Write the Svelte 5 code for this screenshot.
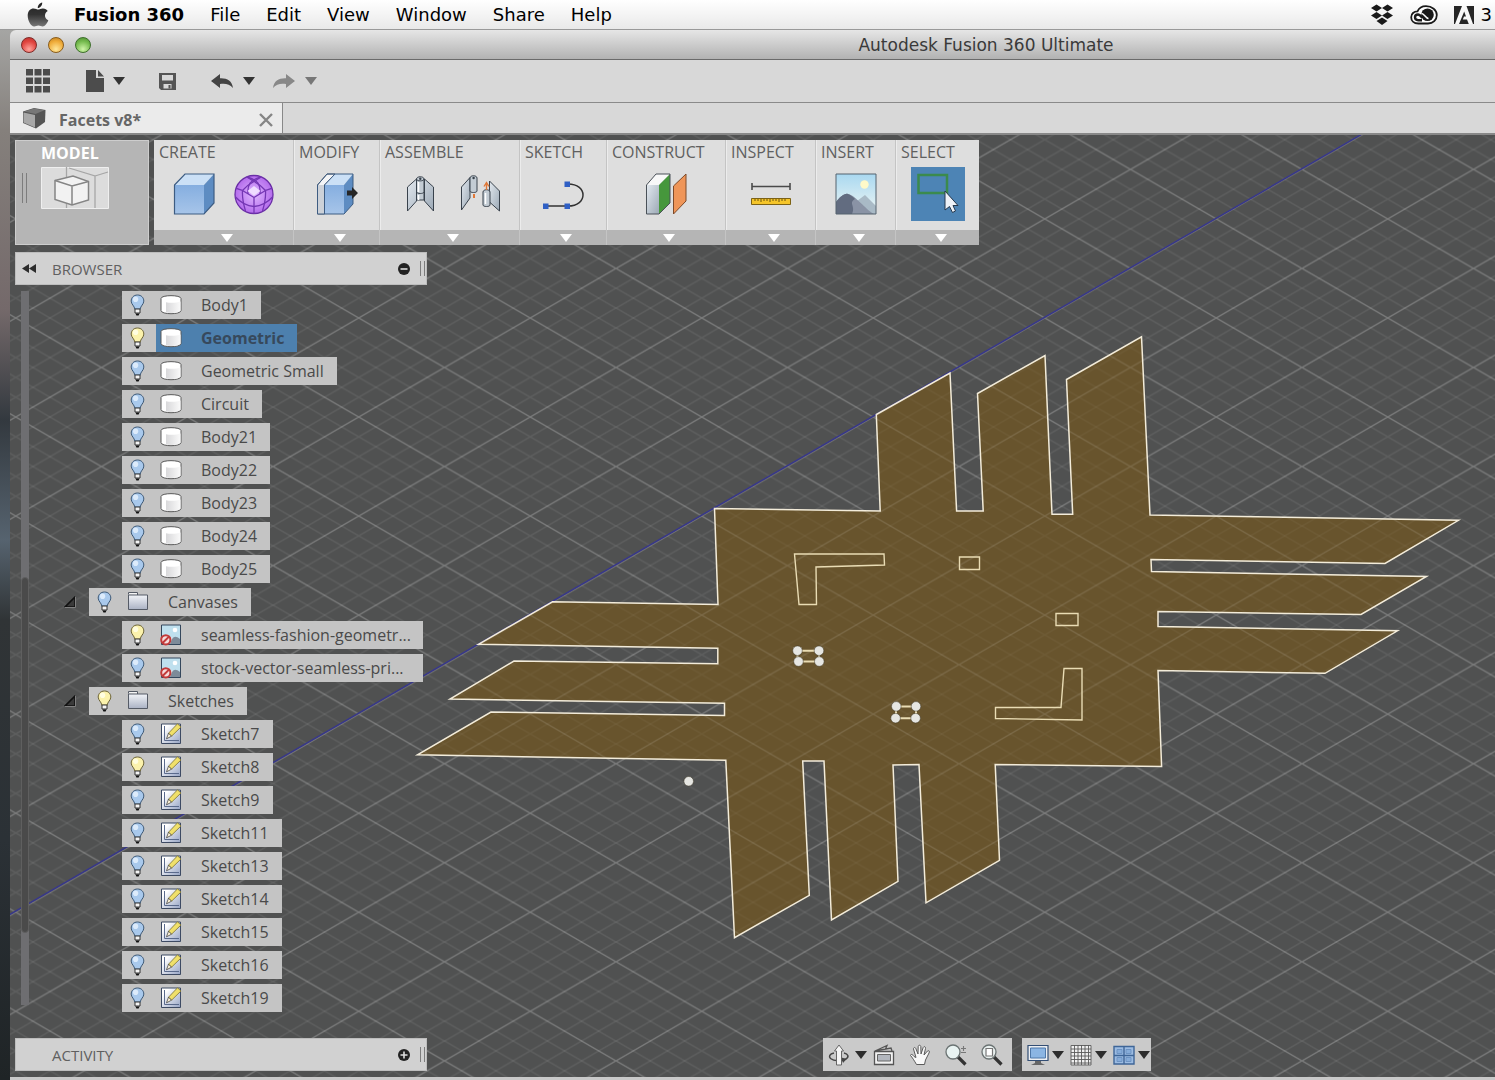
<script>
  const menus = ['File', 'Edit', 'View', 'Window', 'Share', 'Help'];
  const sections = [
    { label: 'CREATE', icons: ['box', 'sphere'] },
    { label: 'MODIFY', icons: ['presspull'] },
    { label: 'ASSEMBLE', icons: ['hinge', 'joint'] },
    { label: 'SKETCH', icons: ['sketchline'] },
    { label: 'CONSTRUCT', icons: ['plane'] },
    { label: 'INSPECT', icons: ['measure'] },
    { label: 'INSERT', icons: ['image'] },
    { label: 'SELECT', icons: ['select'] }
  ];
  const body = (name, on = false, selected = false) => ({ name, on, selected, icon: 'body' });
  const sketch = (name, on = false) => ({ name, on, icon: 'sketch' });
  const tree = [
    body('Body1'),
    body('Geometric', true, true),
    body('Geometric Small'),
    body('Circuit'),
    body('Body21'),
    body('Body22'),
    body('Body23'),
    body('Body24'),
    body('Body25'),
    { name: 'Canvases', icon: 'folder', group: true },
    { name: 'seamless-fashion-geometr...', icon: 'canvas', on: true, wide: true },
    { name: 'stock-vector-seamless-pri...', icon: 'canvas', wide: true },
    { name: 'Sketches', icon: 'folder', group: true, on: true },
    sketch('Sketch7'),
    sketch('Sketch8', true),
    sketch('Sketch9'),
    sketch('Sketch11'),
    sketch('Sketch13'),
    sketch('Sketch14'),
    sketch('Sketch15'),
    sketch('Sketch16'),
    sketch('Sketch19')
  ];
  const gridSteps = [-4, -3, -2, -1, 1, 2, 3, 4];
  const W = 171.5;
  const H = 99.05;
  const outline =
    '714.5,508.5 880.2,511 876.3,414.5 950,373 956.6,511 983.2,511 977.5,393.5 1045,355.5 1052,514.3 1072.7,514.3 1066.5,379.5 1141.5,336.8 1150,515 1458.5,520.3 1385,563.5 1151,559.5 1151.5,571.5 1426.5,576.5 1361,614.5 1158,611.5 1158,626.5 1397.5,630.8 1325,673.3 1158,670.5 1161.6,766.5 995.2,764.5 999.5,860.3 926,902.8 919,764.5 893,765 898,881.3 831.5,920 824,761 802.7,761 809.3,895.3 734.5,937.7 725.8,760.2 417.5,754.8 491,712 724.5,715.5 724.5,703.3 450,699 514,661 717.8,663.7 717.8,648.3 478.5,644.3 552.5,601.8 718,604.5';
  const points = [
    [797.5, 650.7], [819, 650.7], [798.5, 661.5], [819.3, 661.5],
    [896.3, 706.4], [916, 706.4], [895.6, 718.2], [915.6, 718.2],
    [688.7, 781.3]
  ];
</script>

{#snippet down(cls)}
  <svg class={cls} width="12" height="8" viewBox="0 0 12 8" aria-hidden="true"><path d="M0 0H12L6 8Z" fill="currentColor" /></svg>
{/snippet}

{#snippet bulb(on)}
  <svg width="15" height="22" viewBox="0 0 15 22" aria-hidden="true">
    <path d="M7.5 1C3.6 1 1.2 3.8 1.2 7.1 1.2 10.3 4.6 12 4.8 15.2H10.2C10.4 12 13.8 10.3 13.8 7.1 13.8 3.8 11.4 1 7.5 1Z" fill={on ? '#fbf2ac' : '#a9c9ec'} stroke={on ? '#6d6436' : '#3c5876'} stroke-width="1" />
    <ellipse cx="5.6" cy="5.3" rx="2.6" ry="2.8" fill={on ? '#fffde0' : '#dcebfb'} />
    <path d="M5 15H10V19H5Z" fill="#f4f4f4" stroke="#333" stroke-width="1" />
    <path d="M5.5 19.5H9.5L8.6 21.5H6.4Z" fill="#111" />
  </svg>
{/snippet}

{#snippet nodeIcon(kind)}
  <svg width="22" height="22" viewBox="0 0 22 22" aria-hidden="true">
    {#if kind === 'body'}
      <path d="M1 4.500C1 .7 21 .7 21 4.500V16.500C21 20.800 1 20.800 1 16.500Z" fill="#fff" stroke="#5a5a5a" />
      <path d="M6 8.200C10 9 17 9 20.500 7.500V16.500C19 19 10 19.500 6 18.500Z" fill="url(#bodyShade)" />
    {:else if kind === 'folder'}
      <path d="M1.500 3.500V1.500H10.500V4" fill="#f5f5f5" stroke="#555b66" />
      <path d="M1.500 4H20.500V18.500H1.500Z" fill="url(#folderShade)" stroke="#555b66" />
    {:else if kind === 'canvas'}
      <path d="M1.500 1H20.500V20.500H1.500Z" fill="#bfe0ee" stroke="#34475c" />
      <path d="M2 14L7 10 20 20H2Z" fill="#dfe6ea" />
      <path d="M10 20C12 14 14 10 20 15V20Z" fill="#7d8b99" />
      <circle cx="15" cy="6" r="2.300" fill="#fff" />
      <circle cx="5.800" cy="15.800" r="4.600" fill="#f6dcdc" stroke="#c23a3a" stroke-width="2" />
      <path d="M2.800 18.800L9 12.600" stroke="#c23a3a" stroke-width="2" />
    {:else}
      <path d="M1.500 1H20.500V20.500H1.500Z" fill="url(#sketchShade)" stroke="#3d4a63" />
      <path d="M4.500 3V17.500H19" fill="none" stroke="#5a6a8c" />
      <path d="M17.500 .8L21 4 11.500 13.200 8.500 10.200Z" fill="#f0e06a" stroke="#7a7033" stroke-width=".8" />
      <path d="M8.500 10.200L11.500 13.200 6.500 15.800Z" fill="#fff4d8" stroke="#333" stroke-width=".7" />
    {/if}
  </svg>
{/snippet}

{#snippet toolIcon(kind)}
  <svg width="42" height="42" viewBox="0 0 42 42" aria-hidden="true">
    {#if kind === 'box'}
      <path d="M1.500 12L12 1H41L31 12Z" fill="#cbe0f6" />
      <path d="M31 12L41 1V30L31 41Z" fill="#5d8cc2" />
      <path d="M1.500 12H31V41H1.500Z" fill="url(#blueFace)" />
      <path d="M1.500 12L12 1H41V30L31 41H1.500Z" fill="none" stroke="#3d5c82" stroke-width="1.200" />
    {:else if kind === 'sphere'}
      <circle cx="21" cy="21.500" r="19" fill="url(#purple)" stroke="#6a2ea6" stroke-width="1.300" />
      <g fill="none" stroke="#7436b4" stroke-width="1.300">
        <path d="M21 24.500V40.500M21 24.500L9.500 17.500M21 24.500L32.500 17.500" />
        <path d="M9.500 17.500C13 13.500 16 11 21 8.500 26 11 29 13.500 32.500 17.500" />
        <path d="M9.500 17.500C9 25 10 30 12.500 38M32.500 17.500C33 25 32 30 29.500 38" />
        <path d="M9.500 17.500C6.500 16.500 4.500 16 3 15M32.500 17.500C35.500 16.500 37.500 16 39 15M21 8.500C17 6 15 4.500 13.500 4M21 8.500C25 6 27 4.500 28.500 4" />
        <path d="M2.500 24C8 30 14 33 21 33.500 28 33 34 30 39.500 24M15 21C14 12 17 7 28 4M27 21C28 12 25 7 14 4" />
      </g>
      <path d="M21 13L27.500 18 21 22.500 14.500 18Z" fill="#efdcff" />
    {:else if kind === 'presspull'}
      <path d="M1.500 12L11 1H19L8.500 12V41H1.500Z" fill="#f4f5f7" stroke="#59636f" />
      <path d="M1.500 12H8.500V41H1.500Z" fill="#ccd1d8" />
      <path d="M8.500 12L19 1H37L28 12Z" fill="#cbe0f6" />
      <path d="M28 12L37 1V31L28 41Z" fill="#5d8cc2" />
      <path d="M8.500 12H28V41H8.500Z" fill="url(#blueFace)" />
      <path d="M1.500 12L11 1H37V31L28 41H1.500ZM8.500 41V12L19 1" fill="none" stroke="#3d5c82" />
      <path d="M31 17.500H36V14L42 20 36 26V22.500H31Z" fill="#262626" />
    {:else if kind === 'hinge'}
      <path d="M8.500 14L17.500 6V28L8.500 38ZM34.500 14L25.500 6V28L34.500 38Z" fill="url(#steel)" stroke="#39424c" />
      <path d="M17.500 6C17.500 3 25 3 25 6V27H17.500Z" fill="#c3ccd4" stroke="#39424c" />
      <path d="M17.500 6C17.500 8.500 25 8.500 25 6M17.500 19C18 21 24.500 21 25 19" fill="none" stroke="#39424c" />
      <path d="M19.500 9V19M19.500 22V27" stroke="#fff" stroke-width="1.600" />
      <circle cx="21.300" cy="5.700" r="1.200" fill="#39424c" />
    {:else if kind === 'joint'}
      <path d="M2.500 14L11 4.500V25L2.500 37Z" fill="url(#steel)" stroke="#39424c" />
      <path d="M11 5C11 2 18 2 18 5V18C18 20 11 20 11 18Z" fill="#c3ccd4" stroke="#39424c" />
      <circle cx="14.600" cy="5" r="1.200" fill="#39424c" />
      <path d="M15 21V25" stroke="#e07838" stroke-width="2" />
      <path d="M30.500 8L40.500 18V38L30.500 29Z" fill="url(#steel)" stroke="#39424c" />
      <path d="M24 19C24 16 31 16 31 19V32C31 34 24 34 24 32Z" fill="#c3ccd4" stroke="#39424c" />
      <path d="M26.500 20V31" stroke="#fff" stroke-width="1.500" />
      <path d="M27.500 17V10M25 13.500L27.500 9.500 30 13.500" fill="none" stroke="#e07838" stroke-width="1.400" />
    {:else if kind === 'sketchline'}
      <path d="M4 33H26C46 33 46 11 26 11" fill="none" stroke="#333" stroke-width="1.500" />
      <path d="M1 30.500H6.500V36H1ZM22.500 30.500H28V36H22.500ZM22.500 8.500H28V14H22.500Z" fill="#2f5fc4" />
    {:else if kind === 'plane'}
      <path d="M1.500 12L11 1H25L14 12Z" fill="#f8f8f8" />
      <path d="M1.500 12H14V41H1.500Z" fill="url(#steel)" />
      <path d="M14 12L25 1V30L14 41Z" fill="#46973c" />
      <path d="M1.500 12L11 1H25V30L14 41H1.500Z" fill="none" stroke="#4a5158" />
      <path d="M28.500 13L41 1V28L28.500 41Z" fill="#ef9558" stroke="#7d4a2a" />
    {:else if kind === 'measure'}
      <path d="M2 13.500H40M2 10V17M40 10V17" stroke="#4a4a4a" stroke-width="1.600" />
      <path d="M1.500 25.500H40.500V31.500H1.500Z" fill="#f5c52a" stroke="#7d6215" />
      <path d="M5 26V28M8 26V28M11 26V29M14 26V28M17 26V28M20 26V29M23 26V28M26 26V28M29 26V29M32 26V28M35 26V28" stroke="#6b520f" />
    {:else if kind === 'image'}
      <path d="M1 1H41V41H1Z" fill="url(#sky)" />
      <circle cx="29.500" cy="11.500" r="4.200" fill="#fff9c9" />
      <path d="M18 31L30 22 41 33V41H18Z" fill="#a9bac6" />
      <path d="M1 29C5 24 9 20 13 21 20 22 30 36 39 41H1Z" fill="#8a93a5" />
      <path d="M1 29C5 24 9 20 13 21 16 22 18 24 20 26 13 30 21 33 17 41H1Z" fill="#626c80" />
      <path d="M1 1H41V41H1Z" fill="none" stroke="#55636f" />
    {/if}
  </svg>
{/snippet}

<svg class="defs" width="0" height="0" aria-hidden="true">
  <defs>
    <linearGradient id="bodyShade"><stop offset="0" stop-color="#d8d8da" /><stop offset="1" stop-color="#fafafa" /></linearGradient>
    <linearGradient id="folderShade" x2="0" y2="1"><stop offset="0" stop-color="#f2f4f8" /><stop offset="1" stop-color="#aab2c4" /></linearGradient>
    <linearGradient id="sketchShade" x2="1" y2="1"><stop offset=".2" stop-color="#fff" /><stop offset="1" stop-color="#95a3c4" /></linearGradient>
    <linearGradient id="blueFace" x2="0" y2="1"><stop offset="0" stop-color="#85aee0" /><stop offset="1" stop-color="#a7c5e9" /></linearGradient>
    <linearGradient id="steel" x2="1" y2="1"><stop offset="0" stop-color="#e3e9ef" /><stop offset="1" stop-color="#9ca9b6" /></linearGradient>
    <linearGradient id="sky" x2="0" y2="1"><stop offset="0" stop-color="#a9d8f0" /><stop offset="1" stop-color="#eef6f4" /></linearGradient>
    <radialGradient id="purple"><stop offset="0" stop-color="#dfb6ff" /><stop offset="1" stop-color="#b46cec" /></radialGradient>
    <linearGradient id="apple" x2="0" y2="1"><stop offset="0" stop-color="#222" /><stop offset=".5" stop-color="#333" /><stop offset="1" stop-color="#777" /></linearGradient>
  </defs>
</svg>

<div class="screen">
  <header class="menubar">
    <button class="apple" aria-label="Apple menu">
      <svg width="22" height="25" viewBox="0 0 22 25" aria-hidden="true">
        <path d="M15.200 .5C15.500 3.200 13 6.200 10.800 6 10.500 3.500 12.800 .9 15.200 .5ZM11.200 7.600C12.500 7.600 13.800 6.300 16 6.400 18.200 6.500 19.800 7.500 20.700 9 16.600 11.500 17.400 16.800 21.300 18.300 20.200 21.300 17.900 24.500 15.700 24.500 14 24.500 13.200 23.500 11.400 23.500 9.500 23.500 8.700 24.500 7.200 24.500 4 24.500 .7 18.500 .7 13.700 .7 9 3.500 6.500 6.600 6.500 8.600 6.500 10 7.600 11.200 7.600Z" fill="url(#apple)" />
      </svg>
    </button>
    <nav>
      <button class="app">Fusion 360</button>
      {#each menus as m}<button>{m}</button>{/each}
    </nav>
    <div class="status">
      <svg width="24" height="22" viewBox="0 0 24 22" aria-hidden="true">
        <path d="M6.500 .5L12 4 6.500 7.500 1 4ZM17.500 .5L23 4 17.500 7.500 12 4ZM6.500 8L12 11.500 6.500 15 1 11.500ZM17.500 8L23 11.500 17.500 15 12 11.500ZM12 13.500L17.500 17 12 21 6.500 17Z" fill="#1a1a1a" />
      </svg>
      <svg width="28" height="20" viewBox="0 0 28 20" aria-hidden="true">
        <path d="M8.500 18.500C3.500 18.500 1.200 15.500 1.200 12.200 1.200 8.800 4 6.300 7.500 6.300 9 3 12 1.200 16 1.200 22 1.200 26.800 5 26.800 10 26.800 15 23 18.500 18 18.500Z" fill="#fff" stroke="#1a1a1a" stroke-width="1.800" />
        <path d="M12.500 13C10.500 10.500 9.500 9.500 8 9.500 6.200 9.500 5 10.700 5 12.300 5 14 6.200 15.200 8.200 15.200H12" fill="none" stroke="#1a1a1a" stroke-width="2.400" />
        <circle cx="17.500" cy="9.800" r="6.300" fill="#1a1a1a" />
        <path d="M11.500 8.500C14 8 15.500 13.500 18.500 13.500" fill="none" stroke="#fff" stroke-width="1.500" />
      </svg>
      <svg width="20" height="18" viewBox="0 0 20 18" aria-hidden="true">
        <path d="M0 0H20V18H0Z" fill="#262626" />
        <path d="M8 0H12.500L19 18H14.800L13 13.500H8.800L10 10.500H12L10.200 5.500 5 18H1Z" fill="#f8f8f8" />
      </svg>
      <span>3</span>
    </div>
  </header>

  <div class="window">
    <div class="titlebar">
      <div class="lights">
        <button class="red" aria-label="Close"></button><button class="amber" aria-label="Minimize"></button><button class="green" aria-label="Zoom"></button>
      </div>
      <h1>Autodesk Fusion 360 Ultimate</h1>
    </div>

    <div class="quick">
      <button aria-label="Data panel">
        <svg width="24" height="24" viewBox="0 0 24 24" aria-hidden="true"><path d="M0 0H7V6.500H0ZM8.500 0H15.500V6.500H8.500ZM17 0H24V6.500H17ZM0 8.500H7V15H0ZM8.500 8.500H15.500V15H8.500ZM17 8.500H24V15H17ZM0 17H7V23.500H0ZM8.500 17H15.500V23.500H8.500ZM17 17H24V23.500H17Z" fill="#4c4c4c" /></svg>
      </button>
      <button class="file" aria-label="File">
        <svg width="18" height="22" viewBox="0 0 18 22" aria-hidden="true"><path d="M0 0H10V8H18V22H0ZM12 0L18 6.500H12Z" fill="#4c4c4c" /></svg>
        {@render down('')}
      </button>
      <button class="save" aria-label="Save">
        <svg width="17" height="17" viewBox="0 0 17 17" aria-hidden="true"><path d="M0 0H17V17H2L0 15ZM3 2V7.500H14V2ZM4.500 11V15.500H12.500V11Z" fill="#555" fill-rule="evenodd" /><path d="M9.500 12H11.500V15.500H9.500Z" fill="#555" /></svg>
      </button>
      <button class="undo" aria-label="Undo">
        <svg width="22" height="15" viewBox="0 0 22 15" aria-hidden="true"><path d="M0 7L9 0V4.300C16 4 21 6.500 22 14 18.500 10 15 9.500 9 10V14Z" fill="#444" /></svg>
        {@render down('')}
      </button>
      <button class="redo" aria-label="Redo">
        <svg width="22" height="15" viewBox="0 0 22 15" aria-hidden="true"><path d="M22 7L13 0V4.300C6 4 1 6.500 0 14 3.500 10 7 9.500 13 10V14Z" fill="#888" /></svg>
        {@render down('')}
      </button>
    </div>

    <div class="tabs">
      <div class="tab">
        <svg width="23" height="21" viewBox="0 0 23 21" aria-hidden="true"><path d="M0 3.500L11 0 22.500 2 22 14 13 20.500 0 15Z" fill="#555" /><path d="M.5 4.500L12 7V19.500L.5 14.500Z" fill="#a8a8a8" /><path d="M1 3.500L11 .5 21.500 2.300 12.500 6Z" fill="#777" /></svg>
        <span>Facets v8*</span>
        <button aria-label="Close tab"><svg width="14" height="14" viewBox="0 0 14 14" aria-hidden="true"><path d="M1 1L13 13M13 1L1 13" stroke="#858585" stroke-width="2.400" /></svg></button>
      </div>
    </div>

    <main>
      <svg class="scene" width="100%" height="100%" aria-hidden="true">
        <defs>
          <pattern id="isoGrid" patternUnits="userSpaceOnUse" x="101.500" y="70.350" width={W} height={H}>
            <g stroke="#fff" stroke-opacity=".07" stroke-width="1.500">
              {#each gridSteps as k}
                <path d="M0 {(k * H) / 5}L{W} {(k * H) / 5 + H}M0 {(k * H) / 5 + H}L{W} {(k * H) / 5}" />
              {/each}
            </g>
            <path d="M0 0L{W} {H}M0 {H}L{W} 0" stroke="#fff" stroke-opacity=".24" stroke-width="1.400" />
          </pattern>
        </defs>
        <g transform="translate(-10 -135)">
          <rect x="10" y="135" width="100%" height="100%" fill="#505151" />
          <rect x="10" y="135" width="100%" height="100%" fill="url(#isoGrid)" />
          <path d="M1363 133.500L9 915" stroke="#37378a" stroke-width="1.500" />
          <polygon points={outline} fill="#68542d" />
          <polygon points={outline} fill="url(#isoGrid)" opacity=".5" />
          <polygon points={outline} fill="none" stroke="#f3ecda" stroke-width="1.500" />
          <g fill="none" stroke="#e9dcb4" stroke-width="1.400">
            <path d="M794.500 554H884L884.500 565 816 567 816.500 604.500H799ZM959.500 557H979.500V569.500H959.500ZM1056 613.500H1078V625.500H1056ZM1064 668.500H1082V720L995.500 718.500V707.500H1061Z" />
            <path d="M797.500 650.700H819M798.500 661.500H819M797.500 650V661M819 650V661M896 706.400H916M896 718.200H916M896 706V718M916 706V718" stroke-width="2" />
          </g>
          {#each points as [x, y]}
            <circle cx={x} cy={y} r="4.800" fill="#e6e6e2" stroke="#3c3626" stroke-opacity=".5" />
          {/each}
        </g>
      </svg>

      <div class="ribbon">
        <button class="workspace">
          <span class="grip"></span>
          <span class="ws">
            <span class="wsname">MODEL</span>
            <svg width="68" height="42" viewBox="0 0 68 42" aria-hidden="true">
              <path d="M.5 .5H67.500V41.500H.5Z" fill="#dcdcdc" stroke="#efefef" />
              <path d="M25.500 0V41M28 1L54 9V41M54 9L67 5" fill="none" stroke="#a6a6a6" stroke-width="1.300" />
              <path d="M14 13.500L32 9 47.500 14.500V33L31 38 14 32.500Z" fill="#f2f2f2" stroke="#858585" stroke-width="1.500" />
              <path d="M14 13.500L31 19 47.500 14.500M31 19V38" fill="none" stroke="#858585" stroke-width="1.500" />
            </svg>
          </span>
        </button>
        <div class="sections">
          {#each sections as s}
            <section>
              <h2>{s.label}</h2>
              <div class="tools">
                {#each s.icons as i}
                  {#if i === 'select'}
                    <button class="active" aria-label="Select">
                      <svg width="54" height="54" viewBox="0 0 54 54" aria-hidden="true">
                        <path d="M7.500 8H36V26H7.500Z" fill="none" stroke="#3b8a4d" stroke-width="2.500" />
                        <path d="M34 24V43L38.500 39.500 41.500 45.500 44.500 44 42 38.500H47Z" fill="#eef2f8" stroke="#26384c" />
                      </svg>
                    </button>
                  {:else}
                    <button aria-label={i}>{@render toolIcon(i)}</button>
                  {/if}
                {/each}
              </div>
              <button class="more" aria-label="{s.label} menu">{@render down('')}</button>
            </section>
          {/each}
        </div>
      </div>

      <div class="panel">
        <button class="fold" aria-label="Collapse"><svg width="14" height="9" viewBox="0 0 14 9" aria-hidden="true"><path d="M7 0V9L0 4.500ZM14 0V9L7 4.500Z" fill="#2c2c2c" /></svg></button>
        <h2>BROWSER</h2>
        <button aria-label="Hide browser"><svg width="12" height="12" viewBox="0 0 12 12" aria-hidden="true"><circle cx="6" cy="6" r="6" fill="#222" /><path d="M2.500 6H9.500" stroke="#ddd" stroke-width="1.600" /></svg></button>
        <span class="grip small"></span>
      </div>

      <div class="browser">
        <div class="track"><div class="thumb"></div></div>
        <ul>
          {#each tree as n}
            <li class:group={n.group}>
              {#if n.group}
                <button class="twist" aria-label="Collapse {n.name}"><svg width="12" height="12" viewBox="0 0 12 12" aria-hidden="true"><path d="M11 1V11H1Z" fill="#3a3a3a" stroke="#111" stroke-width="1.600" /><path d="M.5 11.500H11.500V.5" fill="none" stroke="#999" stroke-width=".8" /></svg></button>
              {/if}
              <div class="row" class:selected={n.selected} class:wide={n.wide}>
                <button class="bulb" aria-label="Toggle {n.name}">{@render bulb(n.on)}</button>
                <button class="name">{@render nodeIcon(n.icon)}<span>{n.name}</span></button>
              </div>
            </li>
          {/each}
        </ul>
      </div>

      <footer>
        <div class="panel">
          <span class="fold"></span>
          <h2>ACTIVITY</h2>
          <button aria-label="Show activity"><svg width="12" height="12" viewBox="0 0 12 12" aria-hidden="true"><circle cx="6" cy="6" r="6" fill="#222" /><path d="M2.500 6H9.500M6 2.500V9.500" stroke="#ddd" stroke-width="1.600" /></svg></button>
          <span class="grip small"></span>
        </div>
        <div class="navs">
          <div class="nav">
            <button aria-label="Orbit">
              <svg width="22" height="22" viewBox="0 0 22 22" aria-hidden="true"><path d="M6 9C1.500 10 .5 12.500 2.500 14.500 6 17.500 14 17.500 18 15 21.500 12.500 20 10 16 9" fill="none" stroke="#444" stroke-width="1.500" /><path d="M13.500 13.500L18.500 15 15 19Z" fill="#444" /><path d="M8.500 21V7H6.500L11 1 15.500 7H13.500V21Z" fill="#f4f4f4" stroke="#666" /></svg>
              {@render down('')}
            </button>
            <button aria-label="Look at"><svg width="22" height="22" viewBox="0 0 22 22" aria-hidden="true"><path d="M2 7L14 1.500 12.500 5M2 7L18 4 19 7" fill="none" stroke="#555" stroke-width="1.300" /><path d="M1.500 7.500H20.500V20.500H1.500Z" fill="#f2f2f2" stroke="#555" stroke-width="1.300" /><path d="M4.500 10.500H17.500V17H4.500Z" fill="#b3b7be" stroke="#666" /></svg></button>
            <button aria-label="Pan"><svg width="22" height="22" viewBox="0 0 22 22" aria-hidden="true"><path d="M7.500 20.500C5.500 17 3 13 1.500 11.500 1.500 10 3.500 10 5 12.500L7 13.500 4.500 5C4.500 3 6.500 3 7 5L9 10 9.200 2.500C9.500 .8 11.500 .8 11.800 2.500L12 10 14.200 3.500C15 2 16.800 2.500 16.500 4.500L15 11 18.500 7C20 6 21 7.500 20 9L16.500 16 15.500 20.500Z" fill="#f8f8f8" stroke="#5b5b5b" /></svg></button>
            <button aria-label="Zoom"><svg width="22" height="22" viewBox="0 0 22 22" aria-hidden="true"><path d="M13 13L20.500 20.500" stroke="#333" stroke-width="3.200" /><circle cx="8" cy="8" r="7" fill="#e9f3f2" stroke="#6b7373" stroke-width="1.300" /><path d="M16 4.500H21M18.500 2V7M16 8.500H21" stroke="#777" stroke-width="1.100" /></svg></button>
            <button aria-label="Fit"><svg width="22" height="22" viewBox="0 0 22 22" aria-hidden="true"><path d="M13 13L20.500 20.500" stroke="#333" stroke-width="3.200" /><circle cx="8" cy="8" r="7" fill="#e9f0ef" stroke="#6b7373" stroke-width="1.300" /><path d="M5 4.500H11.500V12H5Z" fill="#fff" stroke="#777" stroke-width="1.200" /></svg></button>
          </div>
          <div class="nav views">
            <button aria-label="Display settings">
              <svg width="22" height="22" viewBox="0 0 22 22" aria-hidden="true"><path d="M8 16H14V19L18 21H4L8 19Z" fill="#666" /><path d="M1 1.500H21V16.500H1Z" fill="#eceff3" stroke="#334e74" stroke-width="1.200" /><path d="M3.500 4H18.500V14H3.500Z" fill="#8bb5e3" stroke="#4f78a9" /></svg>
              {@render down('')}
            </button>
            <button aria-label="Grid settings">
              <svg width="22" height="22" viewBox="0 0 22 22" aria-hidden="true"><path d="M1 1.500H21V21H1Z" fill="#f0f0f0" stroke="#666" /><path d="M4.500 1V21M8 1V21M11.500 1V21M15 1V21M18.500 1V21M1 5H21M1 8.500H21M1 12H21M1 15.500H21M1 19H21" stroke="#5a5a5a" stroke-width=".9" /></svg>
              {@render down('')}
            </button>
            <button aria-label="Viewports">
              <svg width="22" height="22" viewBox="0 0 22 22" aria-hidden="true"><path d="M1 2.500H21V20H1Z" fill="#9dbce2" stroke="#3f6698" stroke-width="1.400" /><path d="M4 5.500H9V9.500H4ZM13 5.500H18V9.500H13ZM4 13.500H9V17.500H4ZM13 13.500H18V17.500H13Z" fill="#86acd9" stroke="#6e94c4" /><path d="M11 2V20M1 11.500H21" stroke="#3f6698" stroke-width="1.400" /></svg>
              {@render down('')}
            </button>
          </div>
        </div>
      </footer>
    </main>
    <div class="timeline"></div>
  </div>
</div>

<style>
  :global(body) { margin: 0; }
  .defs { position: absolute; }
  .screen {
    min-height: 100vh; display: flex; flex-direction: column; overflow: hidden;
    font-family: 'Open Sans', 'Noto Sans', sans-serif; font-size: 16px; color: #4a4a4a;
    background: linear-gradient(#a5a5a3 30px, #85807c 130px, #74696a 310px, #33393f 420px, #56636f 540px, #303436 620px, #2b3136 840px, #1f2426);
  }
  button { font: inherit; color: inherit; background: none; border: 0; padding: 0; display: flex; align-items: center; }
  h1, h2 { margin: 0; font-size: inherit; font-weight: 400; }
  svg { display: block; flex: none; }

  .menubar { height: 29px; display: flex; align-items: center; background: linear-gradient(#fff, #e9e9e9); border-bottom: 1px solid #999; color: #000; font-family: 'DejaVu Sans', sans-serif; font-size: 18px; white-space: nowrap; }
  .apple { margin-left: 27px; }
  nav { display: flex; gap: 26px; margin-left: 25px; flex: 1; }
  .app { font-weight: 700; }
  .status { display: flex; align-items: center; gap: 16px; padding-right: 3px; }
  .status span { margin-left: -9px; }

  .window { flex: 1; margin-left: 10px; display: flex; flex-direction: column; border-radius: 6px 0 0 0; overflow: hidden; }
  .titlebar { height: 29px; display: flex; align-items: center; background: linear-gradient(#e6e6e6, #b2b2b2); border-bottom: 1px solid #6a6a6a; }
  .titlebar h1 { flex: 1; text-align: center; font-family: 'DejaVu Sans', sans-serif; font-size: 17px; color: #3a3a3a; padding-left: 373px; white-space: nowrap; }
  .lights { display: flex; gap: 11px; padding-left: 11px; width: 83px; }
  .lights button { width: 16px; height: 16px; border-radius: 50%; border: 1px solid #7e2b28; }
  .red { background: radial-gradient(circle at 50% 80%, #ffa49c, #e0443e 60%, #b8332f); }
  .lights .amber { background: radial-gradient(circle at 50% 80%, #ffe79a, #efab38 60%, #bb7b1d); border-color: #8a5d1c; }
  .lights .green { background: radial-gradient(circle at 50% 80%, #cff5a8, #74ba4d 60%, #4b8a2e); border-color: #3d6f2a; }

  .quick { height: 42px; display: flex; align-items: center; padding-left: 16px; background: #d8d8d8; border-bottom: 1px solid #8a8a8a; color: #333; }
  .file { margin-left: 36px; gap: 9px; }
  .save { margin-left: 34px; }
  .undo { margin-left: 35px; gap: 10px; }
  .redo { margin-left: 18px; gap: 10px; color: #777; }

  .tabs { height: 30px; display: flex; background: #d8d8d8; border-bottom: 2px solid #888; }
  .tab { width: 272px; display: flex; align-items: center; background: #ebebeb; border-right: 1px solid #888; color: #666; font-weight: 700; }
  .tab svg { margin-left: 13px; }
  .tab span { flex: 1; margin-left: 13px; padding-top: 4px; }
  .tab button { padding-right: 9px; padding-top: 4px; }

  main { flex: 1; position: relative; display: flex; flex-direction: column; align-items: flex-start; }
  .scene { position: absolute; inset: 0; }
  .ribbon, .panel, .browser, footer { position: relative; }
  .ribbon { display: flex; gap: 5px; margin: 5px 0 0 5px; height: 105px; }
  .workspace { box-sizing: border-box; width: 134px; align-items: flex-start; background: #b5b5b5; border: 1px solid #cdcdcd; text-align: left; }
  .grip { width: 2px; height: 30px; margin: 32px 0 0 6px; border: solid #7d7d7d; border-width: 0 1px; padding-right: 1px; }
  .ws { display: flex; flex-direction: column; margin-left: 14px; }
  .wsname { color: #fff; font-weight: 700; line-height: 24px; height: 26px; }
  .sections { display: grid; grid-template-columns: 140px 86px 140px 87px 119px 90px 80px 83px; background: #dedede; }
  section { display: flex; flex-direction: column; border-right: 1px solid #c4c4c4; box-shadow: 1px 0 #ececec; }
  section:last-child { border: 0; box-shadow: none; }
  section h2 { line-height: 24px; height: 24px; padding-left: 5px; color: #606060; }
  .tools { flex: 1; display: flex; justify-content: center; align-items: center; gap: 18px; padding-bottom: 6px; }
  .tools .active { background: #4d84b5; }
  .more { height: 15px; background: #b5b5b5; color: #fff; justify-content: center; padding-left: 6px; }

  .panel { box-sizing: border-box; width: 412px; height: 33px; margin: 7px 0 0 5px; display: flex; align-items: center; background: #d1d1d1; border: 1px solid #bdbdbd; }
  .panel h2 { flex: 1; color: #606060; font-size: 15px; }
  .fold { width: 36px; padding-left: 6px; box-sizing: border-box; }
  .grip.small { height: 15px; margin: 0 1px 0 10px; }

  .browser { display: flex; margin: 6px 0 0 11px; }
  .track { width: 8px; height: 714px; background: #6e6e71; display: flex; flex-direction: column; justify-content: flex-end; }
  .thumb { height: 356px; margin-bottom: 72px; background: #4a4a4a; border: 1px solid #5f5f5f; border-radius: 4px; box-sizing: border-box; }
  ul { list-style: none; margin: 0; padding: 0; display: flex; flex-direction: column; gap: 5px; }
  li { display: flex; align-items: center; height: 28px; padding-left: 93px; }
  li.group { padding-left: 35px; }
  .twist { width: 25px; }
  .row { display: flex; height: 28px; background: #c4c4c4; }
  .row.wide { width: 301px; }
  .bulb { flex: none; width: 34px; justify-content: center; padding-right: 4px; box-sizing: border-box; }
  .name { padding: 0 13px 0 4px; gap: 19px; white-space: nowrap; }
  .wide .name { padding-right: 0; }
  .selected .name { background: #4d80ae; font-weight: 700; color: #37495c; }

  footer { display: flex; align-self: stretch; margin-top: auto; padding-bottom: 6px; }
  footer .panel { margin-top: 0; flex: none; }
  .navs { flex: 1; display: flex; justify-content: center; gap: 10px; padding-left: 51px; }
  .nav { box-sizing: border-box; height: 33px; display: flex; align-items: center; gap: 14px; padding: 0 9px 0 5px; background: #cacaca; color: #2d2d2d; }
  .nav button { gap: 5px; }
  .nav button:first-child { margin-right: -8px; }
  .nav.views { gap: 6px; padding: 0 1px 0 5px; }
  .nav.views button { gap: 3px; margin: 0; }
  .timeline { height: 3px; background: #c9c9c9; }
</style>
